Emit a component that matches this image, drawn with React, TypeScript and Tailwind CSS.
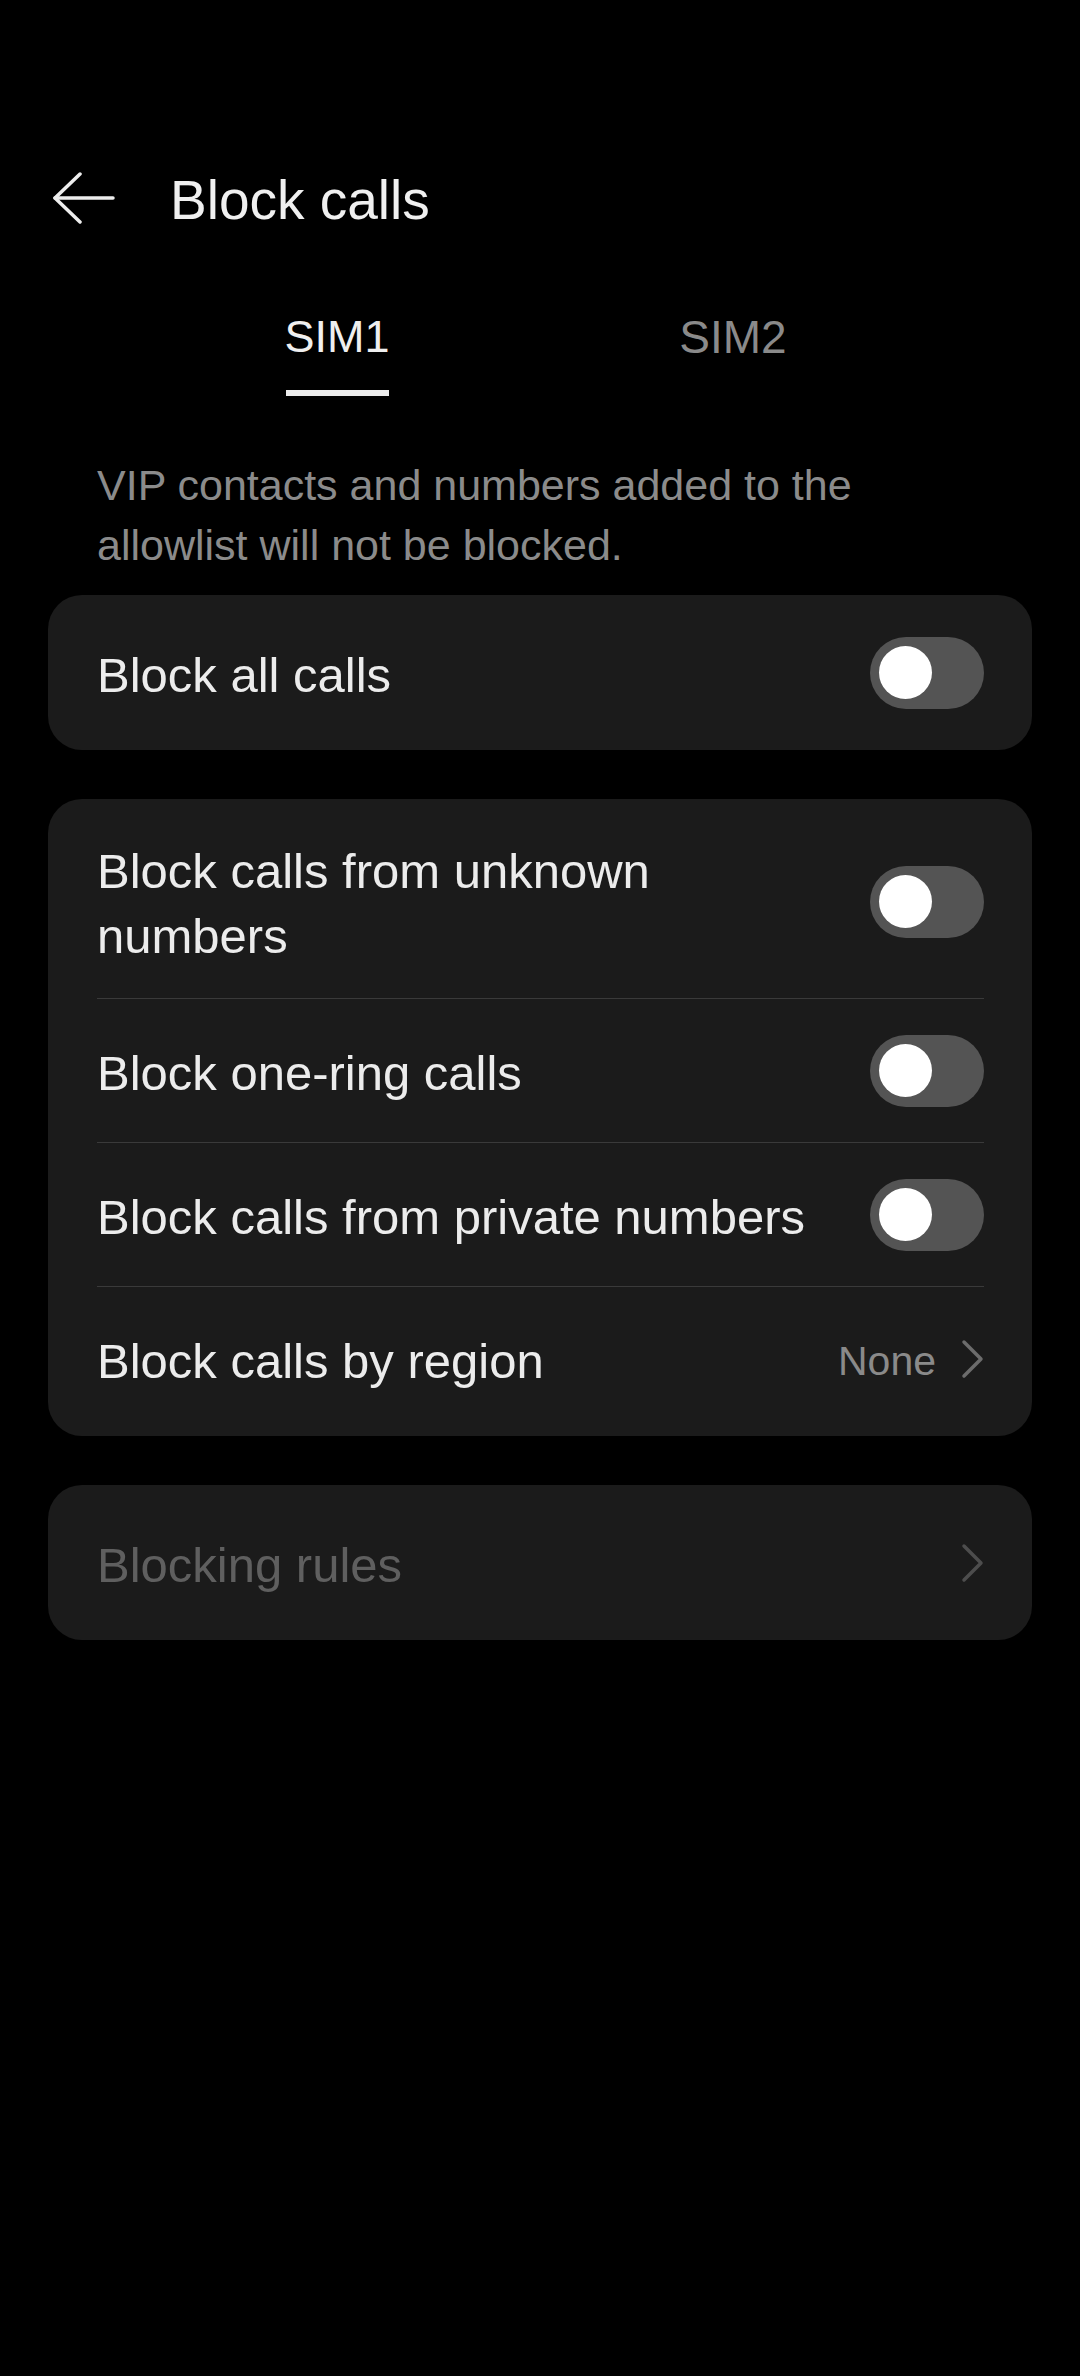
import React from "react";

const font = { fontFamily: '"Liberation Sans", Arial, sans-serif' };

function Toggle() {
  return (
    <div className="w-[114px] h-[72px] rounded-full bg-[#545454] flex items-center pl-[9px] shrink-0">
      <div className="w-[53px] h-[53px] rounded-full bg-white" />
    </div>
  );
}

function Chevron({ color }: { color: string }) {
  return (
    <svg width="23" height="40" viewBox="0 0 23 40" fill="none">
      <polyline
        points="3,3 20,20 3,37"
        stroke={color}
        strokeWidth="3.5"
        strokeLinecap="round"
        strokeLinejoin="round"
      />
    </svg>
  );
}

function Divider() {
  return <div className="h-px bg-[#3a3a3a]" />;
}

function ToggleRow({ label }: { label: string }) {
  return (
    <div className="flex items-center justify-between gap-[43px] min-h-[143px] py-[29px]">
      <span className="pt-[5px] text-[49px] leading-[65px] text-[#ececec]">{label}</span>
      <Toggle />
    </div>
  );
}

export default function App() {
  return (
    <div className="min-h-[2376px] w-[1080px] bg-black" style={font}>
      {/* header */}
      <div className="pt-[168px] pl-[53px] flex items-center h-[233px]">
        <svg width="62" height="52" viewBox="0 0 62 52" fill="none" className="mb-[6px]">
          <line x1="2" y1="26" x2="60" y2="26" stroke="#ededed" strokeWidth="3.5" strokeLinecap="round" />
          <polyline points="27,2 2,26 27,50" stroke="#ededed" strokeWidth="3.5" strokeLinecap="round" strokeLinejoin="round" />
        </svg>
        <h1 className="ml-[55px] text-[55px] leading-[65px] text-[#f0f0f0]">Block calls</h1>
      </div>

      {/* tabs */}
      <div className="mt-[77px] ml-[139px] flex">
        <div className="w-[396px] flex flex-col items-center">
          <span className="text-[45px] leading-[54px] text-[#efefef]">SIM1</span>
          <div className="mt-[26px] w-[103px] h-[6px] bg-[#ececec]" />
        </div>
        <div className="w-[396px] flex flex-col items-center">
          <span className="text-[46px] leading-[54px] text-[#8a8a8a]">SIM2</span>
        </div>
      </div>

      <p className="mt-[59px] ml-[97px] w-[830px] text-[43px] leading-[60px] text-[#8b8b8b]">
        VIP contacts and numbers added to the allowlist will not be blocked.
      </p>

      <div className="mx-[48px] mt-[20px] flex flex-col gap-[49px]">
        <div className="rounded-[34px] bg-[#1b1b1b] pl-[49px] pr-[48px] py-[6px]">
          <ToggleRow label="Block all calls" />
        </div>

        <div className="rounded-[34px] bg-[#1b1b1b] pl-[49px] pr-[48px] py-[6px]">
          <ToggleRow label="Block calls from unknown numbers" />
          <Divider />
          <ToggleRow label="Block one-ring calls" />
          <Divider />
          <ToggleRow label="Block calls from private numbers" />
          <Divider />
          <div className="flex items-center justify-between min-h-[143px]">
            <span className="pt-[5px] text-[49px] leading-[65px] text-[#ececec]">Block calls by region</span>
            <div className="flex items-center gap-[25px]">
              <span className="pt-[4px] text-[41px] leading-[60px] text-[#8a8a8a]">None</span>
              <Chevron color="#6c6c6c" />
            </div>
          </div>
        </div>

        <div className="rounded-[34px] bg-[#1b1b1b] pl-[49px] pr-[48px] py-[6px]">
          <div className="flex items-center justify-between min-h-[143px]">
            <span className="pt-[5px] text-[49px] leading-[65px] text-[#5f5f5f]">Blocking rules</span>
            <Chevron color="#4d4d4d" />
          </div>
        </div>
      </div>
    </div>
  );
}
